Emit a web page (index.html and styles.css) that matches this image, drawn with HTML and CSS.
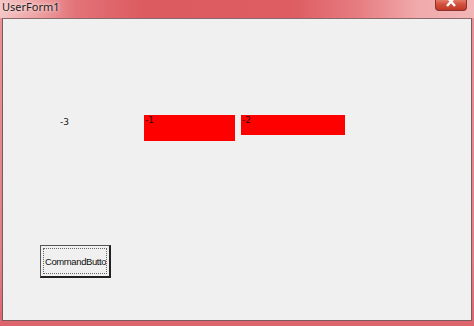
FILE: index.html
```html
<!DOCTYPE html>
<html>
<head>
<meta charset="utf-8">
<link rel="stylesheet" href="styles.css">
</head>
<body>
<div class="window">
  <div class="titlebar">
    <span class="title">UserForm1</span>
    <div class="close">
      <svg width="10" height="8" viewBox="0 0 10 8"><path d="M1 -2 L9 7 M9 -2 L1 7" stroke="#fff" stroke-width="2.4" fill="none"/></svg>
    </div>
  </div>
  <div class="client">
    <div class="label l3">-3</div>
    <div class="label red r1">-1</div>
    <div class="label red r2">-2</div>
    <div class="cmd"><div class="cmd-inner">CommandButton</div></div>
  </div>
</div>
</body>
</html>
```
FILE: styles.css
```css
html, body { margin: 0; padding: 0; }
body { width: 474px; height: 326px; overflow: hidden; background: #e8a0a4; }
.window {
  width: 474px; height: 326px;
  display: flex; flex-direction: column;
  background: linear-gradient(to bottom, #e89498 0%, #e07f84 80%, #de646c 100%);
  box-sizing: border-box;
  padding: 0 2px 4px 2px;
}
.titlebar {
  height: 18px; flex: none;
  margin: 0 -2px;
  position: relative;
  background: linear-gradient(to right, #f4c6c6 0%, #eda0a2 8%, #e27378 16%, #dc5b60 30%, #dd5d62 62%, #e77e82 76%, #f0aaab 88%, #f2b6b6 100%);
}
.title {
  position: absolute; left: 2px; top: 0px;
  font-family: "Noto Sans", sans-serif; font-size: 11px; line-height: 14px;
  color: #222;
  text-shadow: 0 0 6px #fbe0e0, 0 0 3px #fbe0e0;
}
.close {
  position: absolute; left: 435px; top: -1px; width: 32px; height: 12px;
  box-sizing: border-box;
  border: 1px solid #8c3030; border-top: none;
  border-radius: 0 0 4px 4px;
  background: linear-gradient(to bottom, #e7836f 0%, #d0503c 50%, #c13826 100%);
  display: flex; justify-content: center; align-items: flex-start;
}
.close svg { display: block; margin-top: 0; }
.client {
  flex: 1;
  position: relative;
  background: #f0f0f0;
  border: 1px solid #7a5a5c;
  border-top-color: #8a6a6c;
  margin-bottom: 1px;
}
.label {
  position: absolute;
  font-family: "DejaVu Sans", sans-serif; font-size: 9px; line-height: 11px;
  color: #1a1a1a;
}
.l3 { left: 57px; top: 98px; }
.red { background: #ff0000; padding-left: 1px; box-sizing: border-box; color: #3a0000; }
.r1 { left: 141px; top: 96px; width: 91px; height: 26px; }
.r2 { left: 238px; top: 96px; width: 104px; height: 20px; }
.cmd {
  position: absolute; left: 37px; top: 226px; width: 71px; height: 33px;
  box-sizing: border-box;
  border: 1px solid #555;
  border-right: 2px solid #222; border-bottom: 2px solid #222;
  background: #f0f0f0;
  padding: 2px;
}
.cmd-inner {
  height: 100%; box-sizing: border-box;
  border: 1px dotted #666;
  overflow: hidden; white-space: nowrap;
  font-family: "Liberation Sans", sans-serif; font-size: 9.5px;
  letter-spacing: -0.4px;
  color: #111;
  display: flex; align-items: center;
  padding-left: 1px;
}
```
